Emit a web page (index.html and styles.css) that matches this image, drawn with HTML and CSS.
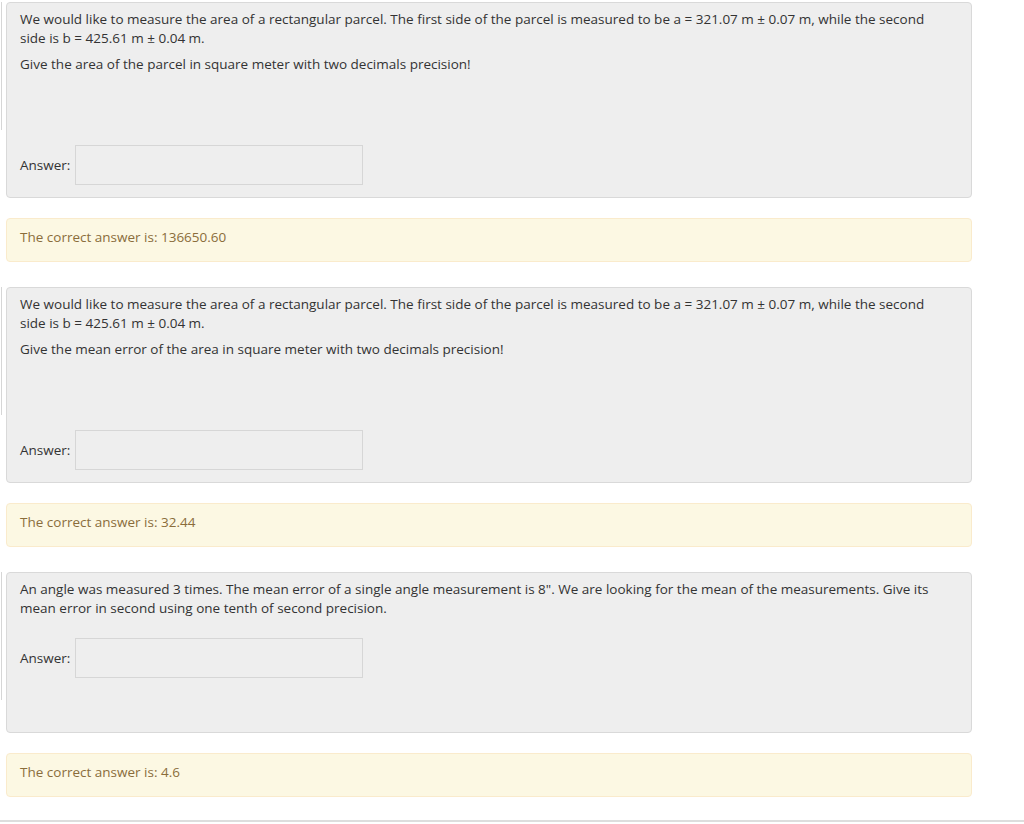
FILE: index.html
```html
<!DOCTYPE html>
<html lang="en">
<head>
<meta charset="utf-8">
<title>Quiz review</title>
<link rel="stylesheet" href="styles.css">
</head>
<body>
<div class="page">
  <div class="que first">
    <div class="info"></div>
    <div class="content">
      <div class="formulation">
        <p>We would like to measure the area of a rectangular parcel. The first side of the parcel is measured to be a = 321.07 m ± 0.07 m, while the second side is b = 425.61 m ± 0.04 m.</p>
        <p>Give the area of the parcel in square meter with two decimals precision!</p>
        <div class="spacer"></div>
        <div class="ablock"><label class="alabel">Answer:</label><input class="answer" type="text"></div>
      </div>
      <div class="outcome">The correct answer is: 136650.60</div>
    </div>
  </div>
  <div class="que">
    <div class="info"></div>
    <div class="content">
      <div class="formulation">
        <p>We would like to measure the area of a rectangular parcel. The first side of the parcel is measured to be a = 321.07 m ± 0.07 m, while the second side is b = 425.61 m ± 0.04 m.</p>
        <p>Give the mean error of the area in square meter with two decimals precision!</p>
        <div class="spacer"></div>
        <div class="ablock"><label class="alabel">Answer:</label><input class="answer" type="text"></div>
      </div>
      <div class="outcome">The correct answer is: 32.44</div>
    </div>
  </div>
  <div class="que">
    <div class="info"></div>
    <div class="content">
      <div class="formulation">
        <p>An angle was measured 3 times. The mean error of a single angle measurement is 8". We are looking for the mean of the measurements. Give its mean error in second using one tenth of second precision.</p>
        <div class="ablock"><label class="alabel">Answer:</label><input class="answer" type="text"></div>
        <div class="tail"></div>
      </div>
      <div class="outcome">The correct answer is: 4.6</div>
    </div>
  </div>
  <div class="footer"></div>
</div>
</body>
</html>
```

FILE: styles.css
```css
html, body {
  margin: 0;
  padding: 0;
  background: #ffffff;
}
body {
  font-family: "Open Sans", "Liberation Sans", sans-serif;
  font-size: 13.5px;
  line-height: 19px;
  color: #333333;
}
.page {
  display: flex;
  flex-direction: column;
}
.que {
  display: flex;
  align-items: flex-start;
  gap: 4px;
  margin-top: 25px;
}
.que.first {
  margin-top: 2px;
}
.info {
  width: 1px;
  height: 128px;
  margin-left: 1px;
  background: #d6d6d6;
  flex: none;
}
.content {
  width: 966px;
  flex: none;
}
.formulation {
  background: #eeeeee;
  border: 1px solid #d9d9d9;
  border-radius: 4px;
  padding: 7px 30px 12px 13px;
}
.formulation p {
  margin: 0 0 7px 0;
}
.formulation p:last-of-type {
  margin-bottom: 0;
}
.spacer {
  height: 51px;
}
.ablock {
  display: flex;
  align-items: center;
  margin-top: 20px;
}
.alabel {
  margin-right: 5px;
}
.answer {
  box-sizing: border-box;
  width: 288px;
  height: 40px;
  margin: 0;
  border: 1px solid #d6d6d6;
  background: #eeeeee;
  border-radius: 0;
  font: inherit;
}
.tail {
  height: 42px;
}
.outcome {
  margin-top: 20px;
  background: #fcf8e3;
  border: 1px solid #faebcc;
  border-radius: 4px;
  color: #8a6d3b;
  padding: 9px 13px 14px 13px;
}
.footer {
  margin-top: 23px;
  height: 0;
  border-top: 2px solid #dddddd;
}
```
